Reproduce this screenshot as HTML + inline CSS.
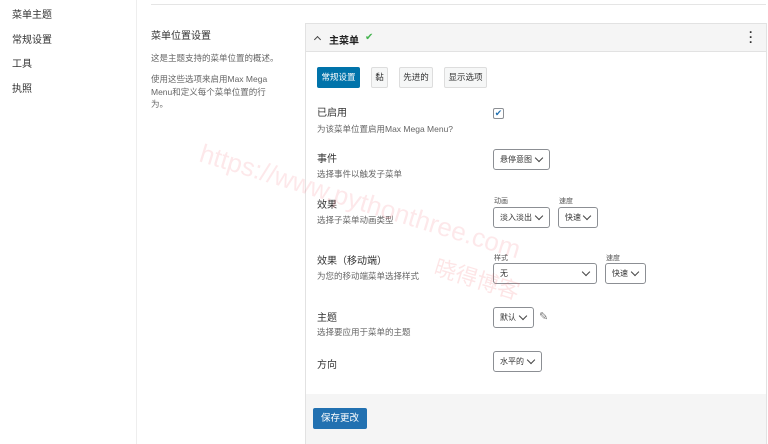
<!DOCTYPE html>
<html><head><meta charset="utf-8"><style>
*{margin:0;padding:0;box-sizing:border-box}
html,body{width:768px;height:444px;overflow:hidden}
body{background:#fff;font-family:"Liberation Sans","Noto Sans CJK SC",sans-serif;color:#333;position:relative}
.a{position:absolute;white-space:nowrap}
.side{font-size:10px;color:#333}
.sel{position:absolute;white-space:nowrap;overflow:hidden;height:21px;border:1px solid #8c8f94;border-radius:3px;background:#fff;font-size:8px;color:#333;padding:0 0 0 6px;line-height:19px}
.sel:after{content:"";position:absolute;right:7px;top:5px;width:5px;height:5px;border-right:1.3px solid #444;border-bottom:1.3px solid #444;transform:rotate(45deg)}
.lab{font-size:10px;color:#333}
.desc{font-size:8.5px;color:#666}
.tiny{font-size:7px;color:#555}
.tab{position:absolute;top:67px;height:21px;border:1px solid #ddd;background:#f6f7f7;border-radius:2px;font-size:8.5px;line-height:19px;text-align:center;color:#333}
</style></head><body>
<div class="a" style="left:136px;top:0;width:1px;height:444px;background:#eee"></div>
<div class="a side" style="left:12px;top:6px">菜单主题</div>
<div class="a side" style="left:12px;top:31px">常规设置</div>
<div class="a side" style="left:12px;top:55px">工具</div>
<div class="a side" style="left:12px;top:80px">执照</div>
<div class="a" style="left:151px;top:4px;width:615px;height:1px;background:#e5e5e5"></div>
<div class="a" style="left:151px;top:27px;font-size:10px;color:#333">菜单位置设置</div>
<div class="a desc" style="left:151px;top:52px">这是主题支持的菜单位置的概述。</div>
<div class="a desc" style="left:151px;top:73px;white-space:normal;width:125px;line-height:12.5px">使用这些选项来启用Max Mega Menu和定义每个菜单位置的行为。</div>
<div class="a" style="left:305px;top:23px;width:462px;height:421px;border:1px solid #e2e2e2;border-bottom:none;background:#fff"></div>
<div class="a" style="left:306px;top:24px;width:460px;height:28px;background:#f5f5f5;border-bottom:1px solid #e2e2e2"></div>
<div class="a" style="left:315px;top:37px;width:5px;height:5px;border-left:1.3px solid #444;border-top:1.3px solid #444;transform:rotate(45deg)"></div>
<div class="a" style="left:329px;top:32px;font-size:10px;font-weight:bold;color:#222">主菜单</div>
<div class="a" style="left:365px;top:32px;font-size:10px;color:#46b450">✔</div>
<div class="a" style="left:748px;top:30px;font-size:12px;font-weight:bold;color:#333;line-height:5px;width:6px;text-align:center">·<br>·<br>·</div>
<div class="a" style="left:317px;top:67px;width:43px;height:21px;background:#0073aa;border-radius:2px;color:#fff;font-size:8.5px;line-height:21px;text-align:center">常规设置</div>
<div class="tab" style="left:371px;width:17px">黏</div>
<div class="tab" style="left:399px;width:34px">先进的</div>
<div class="tab" style="left:444px;width:43px">显示选项</div>
<div class="a lab" style="left:317px;top:104px">已启用</div>
<div class="a desc" style="left:317px;top:123px">为该菜单位置启用Max Mega Menu?</div>
<div class="a" style="left:493px;top:108px;width:11px;height:11px;border:1px solid #8c8f94;border-radius:2px;color:#2271b1;font-size:9px;line-height:9px;text-align:center">✔</div>
<div class="a lab" style="left:317px;top:150px">事件</div>
<div class="a desc" style="left:317px;top:168px">选择事件以触发子菜单</div>
<div class="sel" style="left:493px;top:149px;width:57px">悬停意图</div>
<div class="a lab" style="left:317px;top:196px">效果</div>
<div class="a desc" style="left:317px;top:214px">选择子菜单动画类型</div>
<div class="a tiny" style="left:494px;top:196px">动画</div>
<div class="a tiny" style="left:559px;top:196px">速度</div>
<div class="sel" style="left:493px;top:207px;width:57px">淡入淡出</div>
<div class="sel" style="left:558px;top:207px;width:40px">快速</div>
<div class="a lab" style="left:317px;top:252px">效果（移动端）</div>
<div class="a desc" style="left:317px;top:270px">为您的移动端菜单选择样式</div>
<div class="a tiny" style="left:494px;top:253px">样式</div>
<div class="a tiny" style="left:606px;top:253px">速度</div>
<div class="sel" style="left:493px;top:263px;width:104px">无</div>
<div class="sel" style="left:605px;top:263px;width:41px">快速</div>
<div class="a lab" style="left:317px;top:309px">主题</div>
<div class="a desc" style="left:317px;top:326px">选择要应用于菜单的主题</div>
<div class="sel" style="left:493px;top:307px;width:41px">默认</div>
<div class="a" style="left:539px;top:310px;font-size:11px;color:#777">✎</div>
<div class="a lab" style="left:317px;top:356px">方向</div>
<div class="sel" style="left:493px;top:351px;width:49px">水平的</div>
<div class="a" style="left:306px;top:394px;width:460px;height:50px;background:#f5f5f5"></div>
<div class="a" style="left:313px;top:408px;width:54px;height:21px;background:#2271b1;border-radius:2px;color:#fff;font-size:9.5px;line-height:21px;text-align:center">保存更改</div>
<div class="a" style="left:205px;top:138px;font-size:26px;color:rgba(240,80,90,.13);transform:rotate(17deg);transform-origin:left top">https://www.pythonthree.com</div>
<div class="a" style="left:440px;top:250px;font-size:22px;color:rgba(240,80,90,.15);transform:rotate(17deg);transform-origin:left top">晓得博客</div>
</body></html>
